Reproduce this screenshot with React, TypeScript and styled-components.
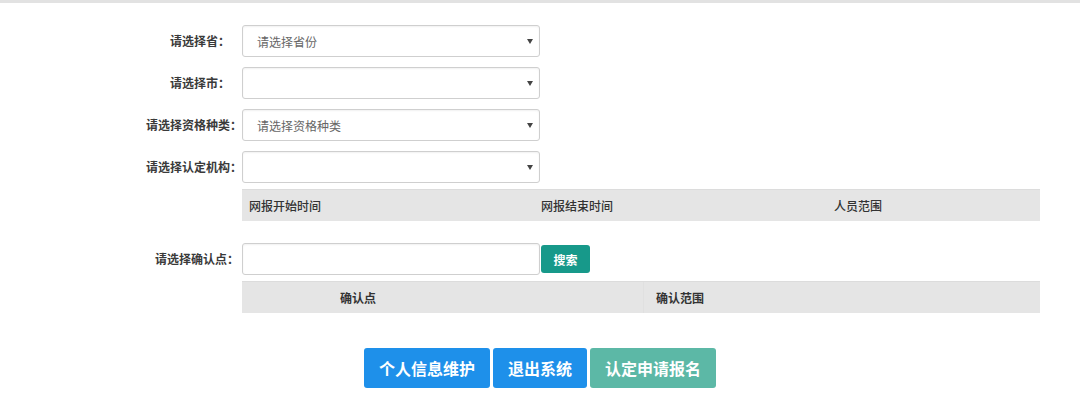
import React from "react";
import styled, { createGlobalStyle } from "styled-components";

const Global = createGlobalStyle`
  html, body { margin: 0; padding: 0; background: #fff; }
  body { font-family: "Noto Sans CJK SC", "Noto Sans", sans-serif; font-size: 12px; color: #333; }
  * { box-sizing: border-box; }
`;

const Page = styled.div`
  width: 1080px;
  height: 393px;
  border-top: 3px solid #e2e2e2;
  padding-top: 22px;
  overflow: hidden;
`;

const Form = styled.div`
  display: grid;
  grid-template-columns: 242px 798px;
  row-gap: 10px;
`;

const Label = styled.div<{ $trail?: number }>`
  display: flex;
  align-items: center;
  justify-content: flex-end;
  padding-right: ${(p) => p.$trail ?? 0}px;
  font-size: 12px;
  font-weight: 600;
  color: #3a3a3a;
  line-height: 1;
  white-space: nowrap;
`;

const Field = styled.div`
  display: flex;
  align-items: center;
  gap: 1px;
`;

const SelectBox = styled.div`
  width: 298px;
  height: 32px;
  border: 1px solid #cfcfcf;
  border-radius: 3px;
  box-shadow: inset 0 1px 2px rgba(0, 0, 0, 0.06);
  display: flex;
  align-items: center;
  justify-content: space-between;
  padding: 0 6px 0 14px;
  color: #666;
  font-size: 12px;
  background: #fff;
`;

const Arrow = styled.span`
  width: 0;
  height: 0;
  border-left: 3px solid transparent;
  border-right: 3px solid transparent;
  border-top: 5px solid #444;
`;

const TextInput = styled.div`
  width: 298px;
  height: 32px;
  border: 1px solid #cfcfcf;
  border-radius: 3px;
  box-shadow: inset 0 1px 2px rgba(0, 0, 0, 0.06);
  background: #fff;
`;

const SearchButton = styled.button`
  width: 49px;
  height: 28px;
  border: none;
  border-radius: 3px;
  background: #17998a;
  color: #fff;
  font-family: inherit;
  font-size: 12px;
  font-weight: 700;
  padding: 0;
`;

const TableHead = styled.div<{ $cols: string; $bold?: boolean }>`
  grid-column: 2;
  display: grid;
  grid-template-columns: ${(p) => p.$cols};
  height: 32px;
  background: #e5e5e5;
  border-top: 1px solid #dcdcdc;
  margin-top: -4px;
  font-size: 12px;
  font-weight: ${(p) => (p.$bold ? 700 : 500)};
  color: #333;
`;

const HeadCell = styled.div<{ $pad: number; $line?: boolean }>`
  display: flex;
  align-items: center;
  padding-left: ${(p) => p.$pad}px;
  border-left: ${(p) => (p.$line ? "1px solid #e0e0e0" : "none")};
`;

const Spacer = styled.div<{ $h: number }>`
  grid-column: 1 / span 2;
  height: ${(p) => p.$h}px;
`;

const Actions = styled.div`
  display: flex;
  justify-content: center;
  gap: 3px;
  margin-top: 35px;
`;

const ActionButton = styled.button<{ $tone: "blue" | "teal" }>`
  height: 40px;
  padding: 0 15px;
  border: none;
  border-radius: 3px;
  background: ${(p) => (p.$tone === "blue" ? "#1e90ea" : "#5cb8a6")};
  color: #fff;
  font-family: inherit;
  font-size: 16px;
  font-weight: 700;
  letter-spacing: 0;
`;

const selects: { label: string; placeholder: string; trail: number }[] = [
  { label: "请选择省：", placeholder: "请选择省份", trail: 12 },
  { label: "请选择市：", placeholder: "", trail: 12 },
  { label: "请选择资格种类：", placeholder: "请选择资格种类", trail: 0 },
  { label: "请选择认定机构：", placeholder: "", trail: 0 },
];

export default function App() {
  return (
    <>
      <Global />
      <Page>
        <Form>
          {selects.map((s) => (
            <React.Fragment key={s.label}>
              <Label $trail={s.trail}>{s.label}</Label>
              <Field>
                <SelectBox>
                  <span>{s.placeholder}</span>
                  <Arrow />
                </SelectBox>
              </Field>
            </React.Fragment>
          ))}
          <TableHead $cols="292px 293px 1fr">
            <HeadCell $pad={7}>网报开始时间</HeadCell>
            <HeadCell $pad={7}>网报结束时间</HeadCell>
            <HeadCell $pad={7}>人员范围</HeadCell>
          </TableHead>
          <Spacer $h={2} />
          <Label $trail={3}>请选择确认点：</Label>
          <Field>
            <TextInput />
            <SearchButton>搜索</SearchButton>
          </Field>
          <TableHead $cols="401px 1fr" $bold>
            <HeadCell $pad={98}>确认点</HeadCell>
            <HeadCell $pad={12} $line>确认范围</HeadCell>
          </TableHead>
        </Form>
        <Actions>
          <ActionButton $tone="blue">个人信息维护</ActionButton>
          <ActionButton $tone="blue">退出系统</ActionButton>
          <ActionButton $tone="teal">认定申请报名</ActionButton>
        </Actions>
      </Page>
    </>
  );
}
